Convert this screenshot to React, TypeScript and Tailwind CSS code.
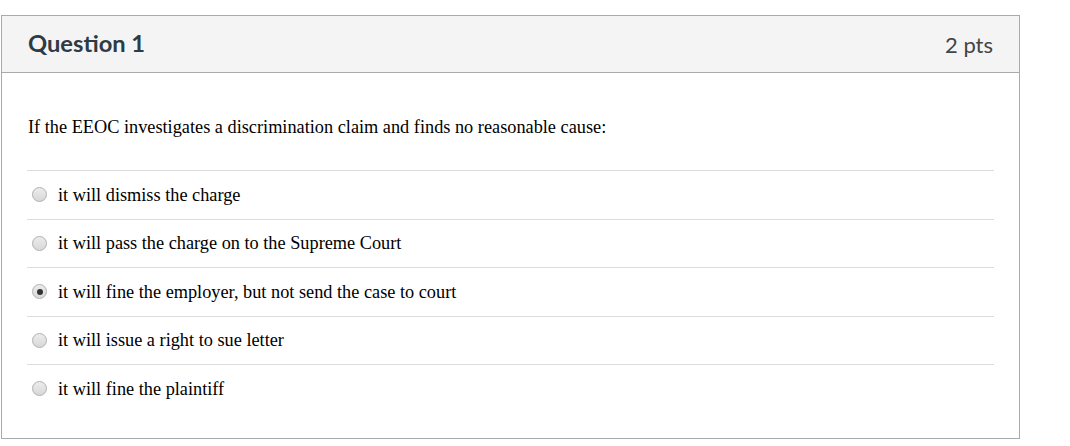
import React from "react";

const answers = [
    { text: "it will dismiss the charge", checked: false },
    { text: "it will pass the charge on to the Supreme Court", checked: false },
    { text: "it will fine the employer, but not send the case to court", checked: true },
    { text: "it will issue a right to sue letter", checked: false },
    { text: "it will fine the plaintiff", checked: false },
];

const Radio = ({ checked }: { checked: boolean }) => {
    return (
        <span className="w-[15px] h-[15px] rounded-full border border-[#b0b0b0] bg-gradient-to-b from-[#ececec] to-[#d8d8d8] flex items-center justify-center shrink-0">
            {checked && <span className="w-[6px] h-[6px] rounded-full bg-[#333]" />}
        </span>
    );
};

export default function App() {
    return (
        <div className="bg-white min-h-[446px] pt-[15px] pl-[1px]">
            <div className="w-[1019px] border border-[#aaa] bg-white">
                <div className="h-[57px] bg-[#f4f4f4] border-b border-[#aaa] px-[26px] flex items-center justify-between font-['Lato',sans-serif]">
                    <h2 className="text-[23.7px] font-bold text-[#2d3b45]">Question 1</h2>
                    <span className="text-[22px] text-[#444]">2 pts</span>
                </div>
                <div className="px-[25px] pt-[44px] pb-[25px] font-['Liberation_Serif',serif] text-[18.3px] text-black">
                    <p className="leading-[20px] mb-[33px] pl-[1px]">
                        If the EEOC investigates a discrimination claim and finds no reasonable cause:
                    </p>
                    {answers.map((a) => (
                        <div
                            key={a.text}
                            className="border-t border-[#ddd] h-[48.5px] flex items-center pl-[5px] gap-[11px]"
                        >
                            <Radio checked={a.checked} />
                            <span className="leading-[20px]">{a.text}</span>
                        </div>
                    ))}
                </div>
            </div>
        </div>
    );
}
